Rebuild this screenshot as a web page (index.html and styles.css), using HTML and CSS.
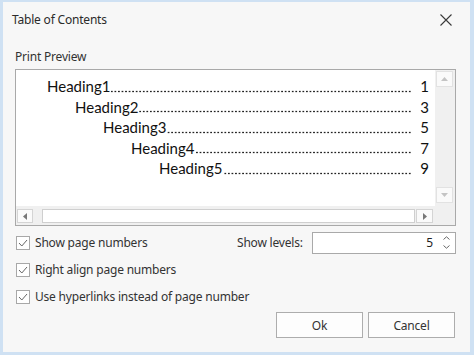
FILE: index.html
```html
<!DOCTYPE html>
<html>
<head>
<meta charset="utf-8">
<link rel="stylesheet" href="styles.css">
</head>
<body>
<div class="screen">
  <div class="dialog">
    <div class="titlebar">
      <span class="title">Table of Contents</span>
      <svg class="close" width="12" height="12" viewBox="0 0 12 12"><path d="M0.5 0.5 L11.5 11.5 M11.5 0.5 L0.5 11.5" stroke="#3a3a3a" stroke-width="1.1" fill="none"/></svg>
    </div>
    <div class="group-label">Print Preview</div>
    <div class="preview">
      <div class="page">
        <div class="toc-row lvl1"><span class="h">Heading1</span><span class="leader"></span><span class="num">1</span></div>
        <div class="toc-row lvl2"><span class="h">Heading2</span><span class="leader"></span><span class="num">3</span></div>
        <div class="toc-row lvl3"><span class="h">Heading3</span><span class="leader"></span><span class="num">5</span></div>
        <div class="toc-row lvl4"><span class="h">Heading4</span><span class="leader"></span><span class="num">7</span></div>
        <div class="toc-row lvl5"><span class="h">Heading5</span><span class="leader"></span><span class="num">9</span></div>
      </div>
      <div class="vscroll">
        <div class="sbtn vbtn"><svg width="7" height="4" viewBox="0 0 7 4"><path d="M0 4 L3.5 0 L7 4 Z" fill="#c4c4c4"/></svg></div>
        <div class="sbtn vbtn"><svg width="7" height="4" viewBox="0 0 7 4"><path d="M0 0 L3.5 4 L7 0 Z" fill="#c4c4c4"/></svg></div>
      </div>
      <div class="hscroll">
        <div class="sbtn hbtn"><svg width="4" height="7" viewBox="0 0 4 7"><path d="M4 0 L0 3.5 L4 7 Z" fill="#777"/></svg></div>
        <div class="thumb"></div>
        <div class="sbtn hbtn right"><svg width="4" height="7" viewBox="0 0 4 7"><path d="M0 0 L4 3.5 L0 7 Z" fill="#777"/></svg></div>
      </div>
      <div class="corner"></div>
    </div>
    <div class="options">
      <div class="opt-row">
        <div class="check"><span class="box"><svg width="10" height="8" viewBox="0 0 10 8"><path d="M1 4 L3.8 7 L9 1" stroke="#666" stroke-width="1" fill="none"/></svg></span><span>Show page numbers</span></div>
        <div class="levels">
          <span class="levels-label">Show levels:</span>
          <div class="spin">
            <span class="spin-val">5</span>
            <span class="spin-arrows">
              <svg width="7" height="4" viewBox="0 0 7 4"><path d="M0.5 3.5 L3.5 0.8 L6.5 3.5" stroke="#666" stroke-width="1" fill="none"/></svg>
              <svg width="7" height="4" viewBox="0 0 7 4"><path d="M0.5 0.5 L3.5 3.2 L6.5 0.5" stroke="#666" stroke-width="1" fill="none"/></svg>
            </span>
          </div>
        </div>
      </div>
      <div class="opt-row">
        <div class="check"><span class="box"><svg width="10" height="8" viewBox="0 0 10 8"><path d="M1 4 L3.8 7 L9 1" stroke="#666" stroke-width="1" fill="none"/></svg></span><span>Right align page numbers</span></div>
      </div>
      <div class="opt-row">
        <div class="check"><span class="box"><svg width="10" height="8" viewBox="0 0 10 8"><path d="M1 4 L3.8 7 L9 1" stroke="#666" stroke-width="1" fill="none"/></svg></span><span>Use hyperlinks instead of page number</span></div>
      </div>
    </div>
    <div class="buttons">
      <div class="btn">Ok</div>
      <div class="btn">Cancel</div>
    </div>
  </div>
</div>
</body>
</html>
```
FILE: styles.css
```css
* { box-sizing: border-box; }
html, body { margin: 0; padding: 0; }
body { width: 474px; height: 355px; overflow: hidden; }
.screen {
  width: 474px; height: 355px;
  background: #cfe1f3;
  padding: 2px 4px 3px 3px;
  font-family: "Noto Sans", "Open Sans", sans-serif;
  font-size: 12px;
  letter-spacing: -0.2px;
  color: #333;
}
.dialog {
  width: 467px; height: 350px;
  background: #f7f7f7;
  display: flex; flex-direction: column;
  padding: 0 14px 0 12px;
}
.titlebar {
  height: 34px;
  display: flex; align-items: center; justify-content: space-between;
  padding: 0 4px 0 0;
  margin-left: -3px;
}
.title { line-height: 16px; color: #2b2b2b; padding-top: 2px; }
.close { display: block; margin-top: 2px; }
.group-label { margin-top: 13px; line-height: 16px; color: #333; }
.preview {
  margin-top: 4px;
  width: 441px; height: 157px;
  border: 1px solid #a9a9a9;
  background: #fff;
  display: grid;
  grid-template-columns: minmax(0, 1fr) 20px;
  grid-template-rows: minmax(0, 1fr) 19px;
}
.page {
  min-width: 0; overflow: hidden;
  padding: 6px 6px 0 0;
  font-family: "Lato", "Open Sans", sans-serif;
  font-size: 15px;
  letter-spacing: 0;
  color: #111;
}
.toc-row {
  height: 20.5px; line-height: 20.5px;
  display: flex; white-space: nowrap;
}
.lvl1 { padding-left: 31px; }
.lvl2 { padding-left: 59px; }
.lvl3 { padding-left: 87px; }
.lvl4 { padding-left: 115px; }
.lvl5 { padding-left: 143px; }
.leader {
  flex: 1 1 0; min-width: 0;
  margin-left: 1px; margin-right: 8px;
  background-image: radial-gradient(circle at 50% 50%, #222 0.75px, rgba(0,0,0,0) 1.15px);
  background-size: 3.55px 3px;
  background-repeat: repeat-x;
  background-position: right 0 top 13.5px;
}
.num { width: 9px; flex: none; text-align: right; }
.vscroll {
  background: #f0f0f0;
  display: flex; flex-direction: column; justify-content: space-between;
  padding: 1px 2px 3px 1px;
}
.sbtn {
  background: #fafafa;
  border: 1px solid #e2e2e2;
  display: flex; align-items: center; justify-content: center;
  flex: none;
}
.vbtn { height: 16px; }
.hscroll {
  min-width: 0;
  background: #f0f0f0;
  display: flex;
  padding: 3px 2px 2px 1px;
}
.hbtn { width: 16px; border-color: #d4d4d4; }
.hbtn.right { width: 17px; margin-left: 1px; }
.thumb {
  flex: 1; margin-left: 9px;
  background: #fff; border: 1px solid #cfcfcf;
}
.corner { background: #f0f0f0; }
.options { margin-top: 3px; }
.opt-row {
  height: 27px;
  display: flex; align-items: center; justify-content: space-between;
  padding-left: 1px;
  white-space: nowrap;
}
.check { display: flex; align-items: center; gap: 5px; color: #333; }
.box {
  width: 14px; height: 14px;
  border: 1px solid #a8a8a8; background: #fff;
  display: flex; align-items: center; justify-content: center;
}
.levels { display: flex; align-items: center; justify-content: space-between; width: 219px; }
.levels-label { color: #333; }
.spin {
  width: 144px; height: 22px;
  border: 1px solid #a9a9a9; background: #fff;
  display: flex; align-items: center; justify-content: flex-end;
  padding-right: 5px;
}
.spin-val { color: #222; margin-right: 10px; }
.spin-arrows { display: flex; flex-direction: column; gap: 5px; }
.spin-arrows svg { display: block; }
.buttons {
  margin-top: 2px;
  display: flex; justify-content: flex-end; gap: 5px;
  padding-right: 1px;
}
.btn {
  width: 87px; height: 26px;
  border: 1px solid #adadad; background: #fdfdfd;
  display: flex; align-items: center; justify-content: center;
  color: #333;
}
```
